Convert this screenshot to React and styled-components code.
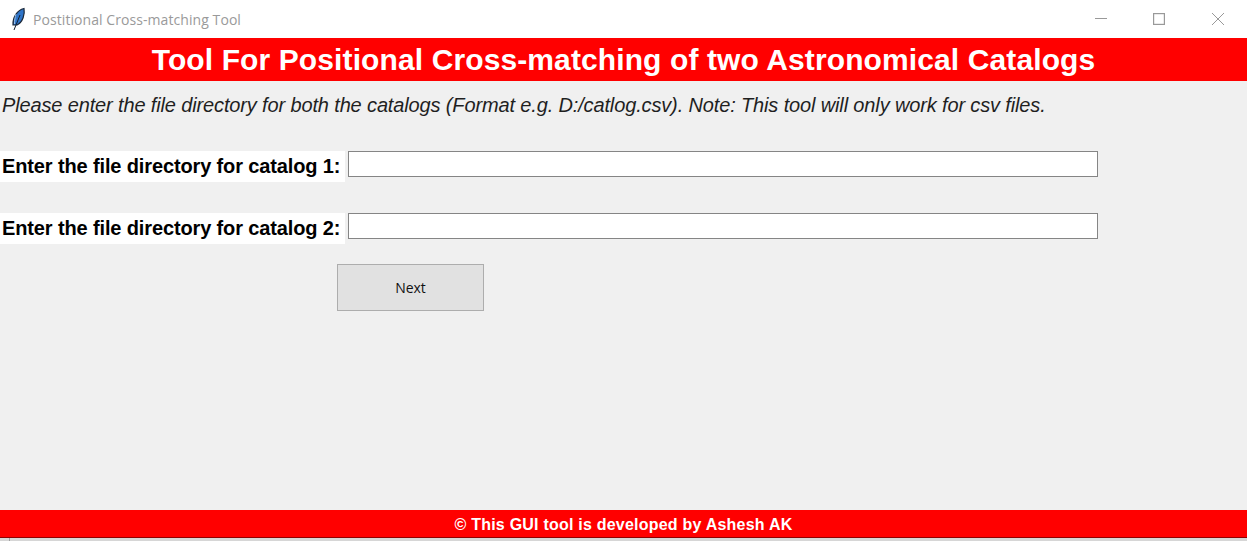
import React from "react";
import styled, { createGlobalStyle } from "styled-components";

const GlobalStyle = createGlobalStyle`
  html, body {
    margin: 0;
    padding: 0;
    background: #f0f0f0;
  }
  body {
    font-family: "Liberation Sans", Arial, sans-serif;
    overflow: hidden;
  }
`;

const Page = styled.div`
  width: 1247px;
  height: 541px;
  display: flex;
  flex-direction: column;
  background: #f0f0f0;
  overflow: hidden;
`;

const TitleBar = styled.div`
  height: 38px;
  flex: none;
  background: #fff;
  display: flex;
  align-items: center;
  padding-left: 10px;
`;

const AppTitle = styled.span`
  margin-left: 6px;
  font-family: "Open Sans", "Noto Sans", sans-serif;
  font-size: 14px;
  letter-spacing: 0.07px;
  color: #9a9a9a;
`;

const WindowButtons = styled.div`
  margin-left: auto;
  display: flex;
  height: 100%;
`;

const WindowButton = styled.div`
  width: 58.5px;
  display: flex;
  align-items: center;
  justify-content: center;
`;

const Banner = styled.div`
  height: 43px;
  flex: none;
  box-sizing: border-box;
  padding-top: 1px;
  background: #ff0000;
  color: #fff;
  display: flex;
  align-items: center;
  justify-content: center;
  font-size: 30px;
  font-weight: 700;
  letter-spacing: 0.11px;
`;

const Content = styled.div`
  flex: 1;
  display: flex;
  flex-direction: column;
`;

const Note = styled.p`
  margin: 12px 0 0 2px;
  height: 24px;
  font-size: 20px;
  line-height: 24px;
  font-style: italic;
  letter-spacing: -0.14px;
  color: #1f1f1f;
  white-space: nowrap;
`;

const Row = styled.div`
  display: flex;
  align-items: flex-start;
  margin-top: ${(p) => p.$top}px;
`;

const Label = styled.label`
  width: 345px;
  height: 31px;
  box-sizing: border-box;
  padding-left: 2px;
  background: #fff;
  color: #000;
  font-size: 20px;
  font-weight: 700;
  letter-spacing: -0.13px;
  line-height: 30px;
  white-space: nowrap;
`;

const PathInput = styled.input`
  width: 750px;
  height: 26px;
  margin: 0 0 0 3px;
  padding: 0;
  box-sizing: border-box;
  border: 1px solid #858585;
  background: #fff;
  outline: none;
`;

const ButtonRow = styled.div`
  padding: 20px 0 0 337px;
`;

const NextButton = styled.button`
  width: 147px;
  height: 47px;
  display: block;
  box-sizing: border-box;
  border: 1px solid #adadad;
  background: #e1e1e1;
  color: #111;
  font-family: "Open Sans", "Noto Sans", sans-serif;
  font-size: 14px;
  padding: 0 0 1px;
`;

const Footer = styled.div`
  height: 28px;
  flex: none;
  box-sizing: border-box;
  padding-top: 2px;
  background: #ff0000;
  border-bottom: 1px solid #8f0000;
  color: #fff;
  display: flex;
  align-items: center;
  justify-content: center;
  font-size: 16px;
  font-weight: 700;
  letter-spacing: 0.22px;
`;

const StatusStrip = styled.div`
  height: 3px;
  flex: none;
  background: #d6d6d6;
  padding-left: 9px;
`;

const StripTick = styled.div`
  width: 1px;
  height: 100%;
  background: #a0a0a0;
`;

const FeatherIcon = () => (
  <svg width="17" height="24" viewBox="0 0 17 24">
    <path d="M3 18 C2.5 11 7 3 14 1.5 C15 7 13 15 7 18 Z" fill="#2f74c8" stroke="#1a2636" strokeWidth="1.2" />
    <path d="M6 7 C5 10 4.5 14 4.5 17" stroke="#9cc2ea" strokeWidth="1" fill="none" />
    <path d="M4 23 L10 8" stroke="#12202f" strokeWidth="1" fill="none" />
  </svg>
);

const MinIcon = () => (
  <svg width="12" height="12" viewBox="0 0 12 12">
    <path d="M0 5.5 H12" stroke="#999" strokeWidth="1" />
  </svg>
);

const MaxIcon = () => (
  <svg width="12" height="12" viewBox="0 0 12 12">
    <rect x="0.6" y="0.6" width="10.8" height="10.8" fill="none" stroke="#999" strokeWidth="1.2" />
  </svg>
);

const CloseIcon = () => (
  <svg width="12" height="12" viewBox="0 0 12 12">
    <path d="M0 0 L12 12 M12 0 L0 12" stroke="#999" strokeWidth="1" />
  </svg>
);

const App = () => {
  return (
    <>
      <GlobalStyle />
      <Page>
        <TitleBar>
          <FeatherIcon />
          <AppTitle>Postitional Cross-matching Tool</AppTitle>
          <WindowButtons>
            <WindowButton><MinIcon /></WindowButton>
            <WindowButton><MaxIcon /></WindowButton>
            <WindowButton><CloseIcon /></WindowButton>
          </WindowButtons>
        </TitleBar>
        <Banner>Tool For Positional Cross-matching of two Astronomical Catalogs</Banner>
        <Content>
          <Note>Please enter the file directory for both the catalogs (Format e.g. D:/catlog.csv). Note: This tool will only work for csv files.</Note>
          <Row $top={34}>
            <Label>Enter the file directory for catalog 1:</Label>
            <PathInput />
          </Row>
          <Row $top={31}>
            <Label>Enter the file directory for catalog 2:</Label>
            <PathInput />
          </Row>
          <ButtonRow>
            <NextButton>Next</NextButton>
          </ButtonRow>
        </Content>
        <Footer>© This GUI tool is developed by Ashesh AK</Footer>
        <StatusStrip><StripTick /></StatusStrip>
      </Page>
    </>
  );
};

export default App;
